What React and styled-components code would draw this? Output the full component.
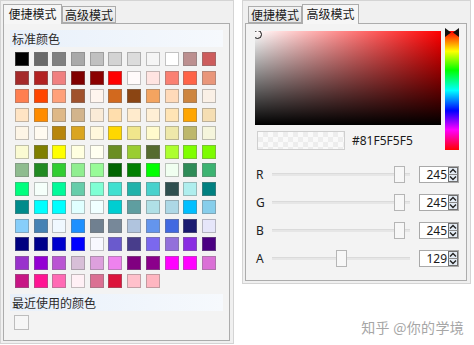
import React from 'react';
import styled, { createGlobalStyle } from 'styled-components';

const Global = createGlobalStyle`
  html, body { margin: 0; padding: 0; background: #ffffff; }
  body {
    font-family: "Noto Sans CJK SC", "Noto Sans", sans-serif;
    font-size: 12px;
    color: #1f1f1f;
  }
`;

const ROWS = [
  ['black','dimgray','gray','darkgray','silver','lightgray','gainsboro','whitesmoke','white','rosybrown','indianred'],
  ['brown','firebrick','lightcoral','maroon','darkred','red','snow','mistyrose','salmon','tomato','darksalmon'],
  ['coral','orangered','lightsalmon','sienna','seashell','chocolate','saddlebrown','sandybrown','peachpuff','peru','linen'],
  ['bisque','darkorange','burlywood','tan','antiquewhite','navajowhite','blanchedalmond','papayawhip','moccasin','orange','wheat'],
  ['oldlace','floralwhite','darkgoldenrod','goldenrod','cornsilk','gold','khaki','lemonchiffon','palegoldenrod','darkkhaki','beige'],
  ['lightgoldenrodyellow','olive','yellow','lightyellow','ivory','olivedrab','yellowgreen','darkolivegreen','greenyellow','chartreuse','lawngreen'],
  ['darkseagreen','forestgreen','limegreen','lightgreen','palegreen','darkgreen','green','lime','honeydew','seagreen','mediumseagreen'],
  ['springgreen','mintcream','mediumspringgreen','mediumaquamarine','aquamarine','turquoise','lightseagreen','mediumturquoise','darkslategray','paleturquoise','teal'],
  ['darkcyan','aqua','cyan','lightcyan','azure','darkturquoise','cadetblue','powderblue','lightblue','deepskyblue','skyblue'],
  ['lightskyblue','steelblue','aliceblue','dodgerblue','slategray','lightslategray','lightsteelblue','cornflowerblue','royalblue','midnightblue','lavender'],
  ['navy','darkblue','mediumblue','blue','ghostwhite','slateblue','darkslateblue','mediumslateblue','mediumpurple','blueviolet','indigo'],
  ['darkorchid','darkviolet','mediumorchid','thistle','plum','violet','purple','darkmagenta','fuchsia','magenta','orchid'],
  ['mediumvioletred','deeppink','hotpink','lavenderblush','palevioletred','crimson','pink','lightpink'],
];
const COLORS = ROWS.flat();

const Page = styled.div`
  display: flex;
  align-items: flex-start;
  width: 474px;
  height: 345px;
  overflow: hidden;
`;

const Window = styled.div`
  box-sizing: border-box;
  width: ${p => p.$w}px;
  height: ${p => p.$h}px;
  background: #f0f0f0;
  border: 1px solid #d4d4d4;
  padding: 3px 3px 2px 2px;
  display: flex;
  flex-direction: column;
`;

const RightColumn = styled.div`
  margin-left: 8px;
  display: flex;
  flex-direction: column;
`;

const TabBar = styled.div`
  display: flex;
  align-items: flex-end;
  height: 19px;
  position: relative;
  z-index: 1;
`;

const Tab = styled.div`
  box-sizing: border-box;
  width: ${p => p.$w}px;
  height: ${p => (p.$active ? 20 : 17)}px;
  margin-left: ${p => p.$ml || 0}px;
  margin-bottom: ${p => (p.$active ? -1 : 0)}px;
  border: 1px solid #acacac;
  border-bottom: ${p => (p.$active ? 'none' : '1px solid #acacac')};
  background: ${p => (p.$active ? '#f6f6f6' : 'linear-gradient(#f2f2f2, #e6e6e6)')};
  display: flex;
  align-items: center;
  justify-content: center;
  font-size: 12px;
  line-height: 1;
  color: #1a1a1a;
  padding-bottom: ${p => (p.$active ? 1 : 0)}px;
`;

const Panel = styled.div`
  box-sizing: border-box;
  flex: 1;
  border: 1px solid #acacac;
  background: #f3f3f3;
  padding: ${p => p.$pad};
  display: flex;
  flex-direction: column;
`;

const SectionHeader = styled.div`
  height: 17px;
  background: linear-gradient(to right, #e8f0fa, #f6f9fd);
  padding-left: 2px;
  display: flex;
  align-items: center;
  font-size: 12px;
  color: #2a2a2a;
  margin-top: ${p => p.$mt || 0}px;
`;

const SwatchGrid = styled.div`
  display: grid;
  grid-template-columns: repeat(11, 14px);
  grid-auto-rows: 14px;
  column-gap: 4.7px;
  row-gap: 4.5px;
  margin: 5px 0 0 5px;
`;

const Swatch = styled.div`
  box-sizing: border-box;
  width: ${p => p.$size || 14}px;
  height: ${p => p.$size || 14}px;
  border: 1px solid rgba(120, 120, 120, 0.45);
  background: ${p => p.$c};
`;

const RecentRow = styled.div`
  display: flex;
  margin: 4px 0 0 4px;
`;

/* ---------- advanced panel ---------- */

const PickerRow = styled.div`
  display: flex;
  gap: 4px;
`;

const PickerLeft = styled.div`
  display: flex;
  flex-direction: column;
`;

const SVArea = styled.div`
  position: relative;
  width: 186px;
  height: 94px;
  overflow: hidden;
  background:
    linear-gradient(to top, #000 0%, rgba(0,0,0,0) 100%),
    linear-gradient(to right, #ffffff 0%, #ff0000 100%);
`;

const SVCursor = styled.div`
  position: absolute;
  left: -2px;
  top: -1px;
  width: 7px;
  height: 7px;
  border: 1px solid #111;
  border-radius: 50%;
`;

const PreviewRow = styled.div`
  display: flex;
  align-items: center;
  margin: 6px 0 0 2px;
  gap: 7px;
`;

const Preview = styled.div`
  box-sizing: border-box;
  width: 88px;
  height: 19px;
  border: 1px solid #cfcfcf;
  background:
    linear-gradient(rgba(245,245,245,0.55), rgba(245,245,245,0.55)),
    repeating-conic-gradient(#e4e4e4 0% 25%, #ffffff 0% 50%) 0 0 / 10px 10px;
`;

const HexText = styled.span`
  font-family: "Noto Sans", "Noto Sans CJK SC", sans-serif;
  font-size: 12px;
  color: #1a1a1a;
`;

const HueStrip = styled.div`
  position: relative;
  width: 14px;
  height: 119px;
  background: linear-gradient(to bottom, #ff0000 0%, #ffff00 17%, #00ff00 33%, #00ffff 50%, #0000ff 67%, #ff00ff 83%, #ff0000 100%);
`;

const HueMarker = styled.svg`
  position: absolute;
  left: 0;
  top: -3px;
`;

const SliderList = styled.div`
  display: flex;
  flex-direction: column;
  gap: 11px;
  margin-top: 16px;
`;

const SliderRow = styled.div`
  display: flex;
  align-items: center;
  height: 17px;
`;

const ChannelLabel = styled.span`
  width: 17px;
  padding-left: 1px;
  box-sizing: border-box;
  font-family: "Noto Sans", sans-serif;
  font-size: 12px;
  color: #222;
`;

const Track = styled.div`
  position: relative;
  width: 138px;
  height: 17px;
  &::before {
    content: '';
    position: absolute;
    left: 0;
    right: 0;
    top: 7px;
    height: 2px;
    background: #e6e6e6;
    border-top: 1px solid #dadada;
  }
`;

const Thumb = styled.div`
  position: absolute;
  top: 0;
  box-sizing: border-box;
  width: 11px;
  height: 17px;
  background: #f7f7f7;
  border: 1px solid #b5b5b5;
`;

const SpinBox = styled.div`
  box-sizing: border-box;
  margin-left: 9px;
  width: 40px;
  height: 17px;
  border: 1px solid #a9a9a9;
  background: #fff;
  display: flex;
  align-items: center;
`;

const SpinValue = styled.span`
  flex: 1;
  text-align: right;
  padding-right: 1px;
  font-family: "Noto Sans", sans-serif;
  font-size: 12px;
  color: #1a1a1a;
`;

const SpinButtons = styled.svg`
  display: block;
  flex: none;
`;

const Watermark = styled.div`
  align-self: flex-end;
  margin: 33px 7px 0 0;
  font-size: 14px;
  color: #a6a6a6;
  letter-spacing: 0.3px;
`;

function Spinner({ value }) {
  return (
    <SpinBox>
      <SpinValue>{value}</SpinValue>
      <SpinButtons width="10" height="15" viewBox="0 0 10 15">
        <rect x="0.5" y="0.5" width="9" height="14" fill="#e4ecf5" stroke="#6f6f6f" />
        <line x1="0.5" y1="7.5" x2="9.5" y2="7.5" stroke="#8a8a8a" />
        <polyline points="2,5.5 5,2.5 8,5.5" fill="none" stroke="#222" strokeWidth="1.4" />
        <polyline points="2,9.5 5,12.5 8,9.5" fill="none" stroke="#222" strokeWidth="1.4" />
      </SpinButtons>
    </SpinBox>
  );
}

function Slider({ label, value }) {
  const left = Math.round((value / 255) * (138 - 11));
  return (
    <SliderRow>
      <ChannelLabel>{label}</ChannelLabel>
      <Track>
        <Thumb style={{ left }} />
      </Track>
      <Spinner value={value} />
    </SliderRow>
  );
}

export default function App() {
  return (
    <>
      <Global />
      <Page>
        <Window $w={234} $h={344}>
          <TabBar>
            <Tab $active $w={59}>便捷模式</Tab>
            <Tab $w={54}>高级模式</Tab>
          </TabBar>
          <Panel $pad="6px 6px 6px 6px">
            <SectionHeader>标准颜色</SectionHeader>
            <SwatchGrid>
              {COLORS.map((c, i) => (
                <Swatch key={i} $c={c} />
              ))}
            </SwatchGrid>
            <SectionHeader $mt={6}>最近使用的颜色</SectionHeader>
            <RecentRow>
              <Swatch $c="#f6f6f6" $size={15} />
            </RecentRow>
          </Panel>
        </Window>

        <RightColumn>
          <Window $w={229} $h={284}>
            <TabBar>
              <Tab $w={54} $ml={3}>便捷模式</Tab>
              <Tab $active $w={57}>高级模式</Tab>
            </TabBar>
            <Panel $pad="7px 6px 6px 9px">
              <PickerRow>
                <PickerLeft>
                  <SVArea>
                    <SVCursor />
                  </SVArea>
                  <PreviewRow>
                    <Preview />
                    <HexText>#81F5F5F5</HexText>
                  </PreviewRow>
                </PickerLeft>
                <HueStrip>
                  <HueMarker width="14" height="9" viewBox="0 0 14 9">
                    <polygon points="0,0 6,4.5 0,9" fill="#111" />
                    <polygon points="14,0 8,4.5 14,9" fill="#111" />
                  </HueMarker>
                </HueStrip>
              </PickerRow>
              <SliderList>
                <Slider label="R" value={245} />
                <Slider label="G" value={245} />
                <Slider label="B" value={245} />
                <Slider label="A" value={129} />
              </SliderList>
            </Panel>
          </Window>
          <Watermark>知乎 @你的学境</Watermark>
        </RightColumn>
      </Page>
    </>
  );
}
